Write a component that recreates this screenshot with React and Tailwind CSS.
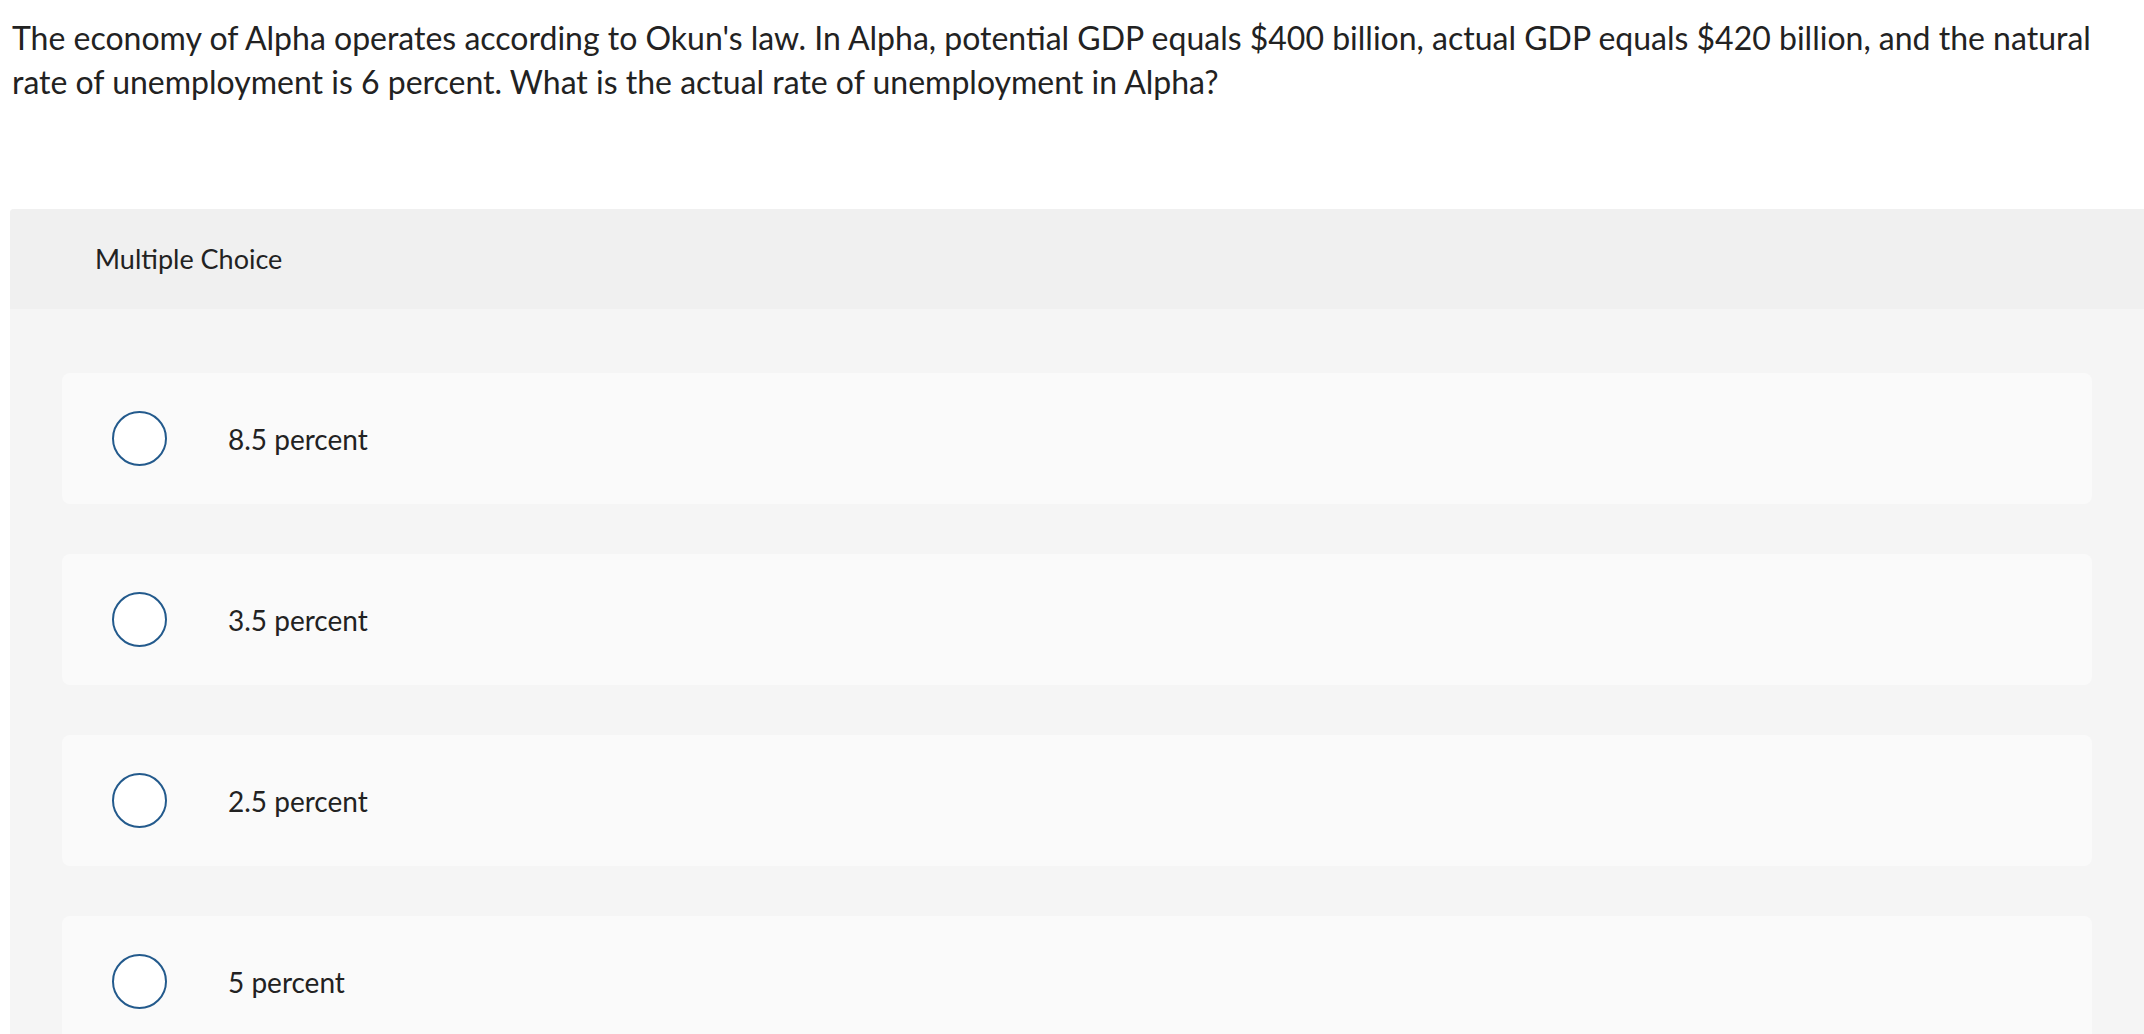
const options = ['8.5 percent', '3.5 percent', '2.5 percent', '5 percent'];

const Radio = () => (
    <span className="block w-[55px] h-[55px] shrink-0 rounded-full border-2 border-[#235a8c] bg-white" />
);

export default function App() {
    return (
        <div className="h-screen bg-white text-[#222] font-['Lato','Liberation_Sans',sans-serif] overflow-hidden">
            {/* question */}
            <p className="pl-3 pt-[16px] w-[2110px] text-[32px] leading-[43.5px]">
                The economy of Alpha operates according to Okun's law. In Alpha, potential GDP equals $400 billion, actual GDP equals $420 billion, and the natural rate of unemployment is 6 percent. What is the actual rate of unemployment in Alpha?
            </p>

            {/* answer panel */}
            <div className="mt-[106px] ml-[10px] rounded-tl-[4px] bg-[#f5f5f5] pb-[60px]">
                <div className="h-[100px] flex items-center pl-[85px] bg-[#f0f0f0] rounded-tl-[4px]">
                    <span className="text-[27px]">Multiple Choice</span>
                </div>
                <div className="pt-[64px] pl-[52px] pr-[52px] flex flex-col gap-[50px]">
                    {options.map((opt) => (
                        <div key={opt} className="h-[131px] rounded-[8px] bg-[#fafafa] flex items-center pl-[50px]">
                            <Radio />
                            <span className="ml-[61px] text-[28px]">{opt}</span>
                        </div>
                    ))}
                </div>
            </div>
        </div>
    );
}
